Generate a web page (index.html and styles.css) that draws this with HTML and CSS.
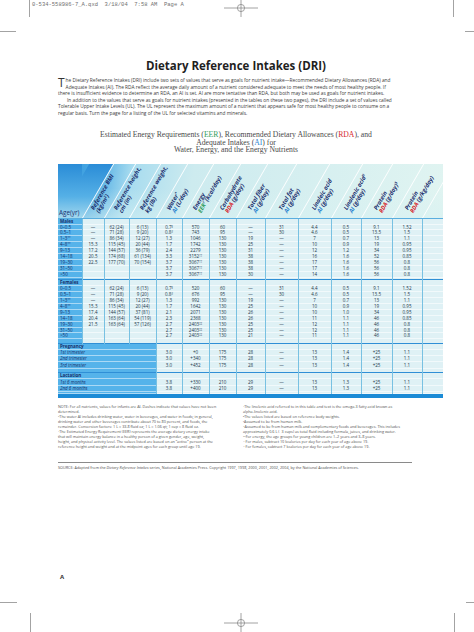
FILE: index.html
```html
<!DOCTYPE html>
<html lang="en">
<head>
<meta charset="utf-8">
<title>Dietary Reference Intakes (DRI)</title>
<link rel="stylesheet" href="styles.css">
</head>
<body>
<svg class="marks" width="474" height="632" viewBox="0 0 474 632" aria-hidden="true">
  <g stroke="#8c8c8c" stroke-width="0.8" fill="none">
    <line x1="29.5" y1="0" x2="29.5" y2="17"/>
    <line x1="0" y1="31.5" x2="16" y2="31.5"/>
    <line x1="453.5" y1="0" x2="453.5" y2="17"/>
    <line x1="465" y1="31.5" x2="474" y2="31.5"/>
    <line x1="224" y1="8" x2="258" y2="8"/>
    <line x1="241" y1="0" x2="241" y2="17"/>
    <circle cx="241" cy="8" r="3.6"/>
    <line x1="0" y1="602.5" x2="17" y2="602.5"/>
    <line x1="30.5" y1="613" x2="30.5" y2="632"/>
    <line x1="466" y1="602.5" x2="474" y2="602.5"/>
    <line x1="454.5" y1="613" x2="454.5" y2="632"/>
    <line x1="224" y1="623" x2="258" y2="623"/>
    <line x1="241" y1="613" x2="241" y2="632"/>
    <circle cx="241" cy="623" r="3.6"/>
  </g>
</svg>
<div class="slug">0-534-558986-7_A.qxd  3/18/04  7:58 AM  Page A</div>

<main class="page">
  <h1 class="title">Dietary Reference Intakes (DRI)</h1>

  <div class="intro">
    <span class="cap">T</span>
    <div class="ln">he Dietary Reference Intakes (DRI) include two sets of values that serve as goals for nutrient intake—Recommended Dietary Allowances (RDA) and</div>
    <div class="ln">Adequate Intakes (AI). The RDA reflect the average daily amount of a nutrient considered adequate to meet the needs of most healthy people. If</div>
    <div class="ln">there is insufficient evidence to determine an RDA, an AI is set. AI are more tentative than RDA, but both may be used as goals for nutrient intakes.</div>
    <div class="ln ind">In addition to the values that serve as goals for nutrient intakes (presented in the tables on these two pages), the DRI include a set of values called</div>
    <div class="ln">Tolerable Upper Intake Levels (UL). The UL represent the maximum amount of a nutrient that appears safe for most healthy people to consume on a</div>
    <div class="ln">regular basis. Turn the page for a listing of the UL for selected vitamins and minerals.</div>
  </div>

  <h2 class="sub">Estimated Energy Requirements (<span class="g">EER</span>), Recommended Dietary Allowances (<span class="r">RDA</span>), and<br>Adequate Intakes (<span class="b">AI</span>) for<br>Water, Energy, and the Energy Nutrients</h2>

  <section class="dri">
    <div class="thead">
      <div class="hc age c1"><span class="agelbl">Age(yr)</span></div>
      <div class="hc c2"><span class="lbl">Reference BMI<br>(kg/m<sup>2</sup>)</span></div>
      <div class="hc c3"><span class="lbl">Reference height,<br>cm (in)</span></div>
      <div class="hc c4"><span class="lbl">Reference weight,<br>kg (lb)</span></div>
      <div class="hc c5"><span class="lbl">Water<sup>*</sup><br><span class="b">AI</span> (L/day)</span></div>
      <div class="hc c6"><span class="lbl">Energy<br><span class="g">EER</span><sup>†</sup> (kcal/day)</span></div>
      <div class="hc c7"><span class="lbl">Carbohydrate<br><span class="r">RDA</span> (g/day)</span></div>
      <div class="hc c8"><span class="lbl">Total fiber<br><span class="b">AI</span> (g/day)</span></div>
      <div class="hc c9"><span class="lbl">Total fat<br><span class="b">AI</span> (g/day)</span></div>
      <div class="hc c10"><span class="lbl">Linoleic acid<br><span class="b">AI</span> (g/day)</span></div>
      <div class="hc c11"><span class="lbl">Linolenic acid<sup>‡</sup><br><span class="b">AI</span> (g/day)</span></div>
      <div class="hc c12"><span class="lbl">Protein<br><span class="r">RDA</span> (g/day)<sup>§</sup></span></div>
      <div class="hc c13"><span class="lbl">Protein<br><span class="r">RDA</span> (g/kg/day)</span></div>
      <div class="hc c14"></div>
    </div>
    <div class="hline"></div>
    <table class="tb">
      <colgroup>
        <col class="c1"><col class="c2"><col class="c3"><col class="c4"><col class="c5"><col class="c6"><col class="c7"><col class="c8"><col class="c9"><col class="c10"><col class="c11"><col class="c12"><col class="c13"><col class="c14">
      </colgroup>
      <tbody>
        <tr class="hd"><td class="a">Males</td><td></td><td></td><td></td><td></td><td></td><td></td><td></td><td></td><td></td><td></td><td></td><td></td><td></td></tr>
        <tr class="r"><td class="a">0–0.5</td><td>—</td><td>62 (24)</td><td>6 (13)</td><td>0.7<sup>‖</sup></td><td>570</td><td>60</td><td>—</td><td>31</td><td>4.4</td><td>0.5</td><td>9.1</td><td>1.52</td><td></td></tr>
        <tr class="r"><td class="a">0.5–1</td><td>—</td><td>71 (28)</td><td>9 (20)</td><td>0.8<sup>#</sup></td><td>743</td><td>95</td><td>—</td><td>30</td><td>4.6</td><td>0.5</td><td>13.5</td><td>1.5</td><td></td></tr>
        <tr class="r"><td class="a">1–3<sup>**</sup></td><td>—</td><td>86 (34)</td><td>12 (27)</td><td>1.3</td><td>1046</td><td>130</td><td>19</td><td>—</td><td>7</td><td>0.7</td><td>13</td><td>1.1</td><td></td></tr>
        <tr class="r"><td class="a">4–8<sup>**</sup></td><td>15.3</td><td>115 (45)</td><td>20 (44)</td><td>1.7</td><td>1742</td><td>130</td><td>25</td><td>—</td><td>10</td><td>0.9</td><td>19</td><td>0.95</td><td></td></tr>
        <tr class="r"><td class="a">9–13</td><td>17.2</td><td>144 (57)</td><td>36 (79)</td><td>2.4</td><td>2279</td><td>130</td><td>31</td><td>—</td><td>12</td><td>1.2</td><td>34</td><td>0.95</td><td></td></tr>
        <tr class="r"><td class="a">14–18</td><td>20.5</td><td>174 (68)</td><td>61 (134)</td><td>3.3</td><td>3152<sup>††</sup></td><td>130</td><td>38</td><td>—</td><td>16</td><td>1.6</td><td>52</td><td>0.85</td><td></td></tr>
        <tr class="r"><td class="a">19–30</td><td>22.5</td><td>177 (70)</td><td>70 (154)</td><td>3.7</td><td>3067<sup>††</sup></td><td>130</td><td>38</td><td>—</td><td>17</td><td>1.6</td><td>56</td><td>0.8</td><td></td></tr>
        <tr class="r"><td class="a">31–50</td><td></td><td></td><td></td><td>3.7</td><td>3067<sup>††</sup></td><td>130</td><td>38</td><td>—</td><td>17</td><td>1.6</td><td>56</td><td>0.8</td><td></td></tr>
        <tr class="r"><td class="a">&gt;50</td><td></td><td></td><td></td><td>3.7</td><td>3067<sup>††</sup></td><td>130</td><td>30</td><td>—</td><td>14</td><td>1.6</td><td>56</td><td>0.8</td><td></td></tr>
        <tr class="gap"><td class="a"></td><td></td><td></td><td></td><td></td><td></td><td></td><td></td><td></td><td></td><td></td><td></td><td></td><td></td></tr>

        <tr class="hd"><td class="a">Females</td><td></td><td></td><td></td><td></td><td></td><td></td><td></td><td></td><td></td><td></td><td></td><td></td><td></td></tr>
        <tr class="r"><td class="a">0–0.5</td><td>—</td><td>62 (24)</td><td>6 (13)</td><td>0.7<sup>‖</sup></td><td>520</td><td>60</td><td>—</td><td>31</td><td>4.4</td><td>0.5</td><td>9.1</td><td>1.52</td><td></td></tr>
        <tr class="r"><td class="a">0.5–1</td><td>—</td><td>71 (28)</td><td>9 (20)</td><td>0.8<sup>#</sup></td><td>676</td><td>95</td><td>—</td><td>30</td><td>4.6</td><td>0.5</td><td>13.5</td><td>1.5</td><td></td></tr>
        <tr class="r"><td class="a">1–3<sup>**</sup></td><td>—</td><td>86 (34)</td><td>12 (27)</td><td>1.3</td><td>992</td><td>130</td><td>19</td><td>—</td><td>7</td><td>0.7</td><td>13</td><td>1.1</td><td></td></tr>
        <tr class="r"><td class="a">4–8<sup>**</sup></td><td>15.3</td><td>115 (45)</td><td>20 (44)</td><td>1.7</td><td>1642</td><td>130</td><td>25</td><td>—</td><td>10</td><td>0.9</td><td>19</td><td>0.95</td><td></td></tr>
        <tr class="r"><td class="a">9–13</td><td>17.4</td><td>144 (57)</td><td>37 (81)</td><td>2.1</td><td>2071</td><td>130</td><td>26</td><td>—</td><td>10</td><td>1.0</td><td>34</td><td>0.95</td><td></td></tr>
        <tr class="r"><td class="a">14–18</td><td>20.4</td><td>163 (64)</td><td>54 (119)</td><td>2.3</td><td>2368</td><td>130</td><td>26</td><td>—</td><td>11</td><td>1.1</td><td>46</td><td>0.85</td><td></td></tr>
        <tr class="r"><td class="a">19–30</td><td>21.5</td><td>163 (64)</td><td>57 (126)</td><td>2.7</td><td>2403<sup>‡‡</sup></td><td>130</td><td>25</td><td>—</td><td>12</td><td>1.1</td><td>46</td><td>0.8</td><td></td></tr>
        <tr class="r"><td class="a">31–50</td><td></td><td></td><td></td><td>2.7</td><td>2403<sup>‡‡</sup></td><td>130</td><td>25</td><td>—</td><td>12</td><td>1.1</td><td>46</td><td>0.8</td><td></td></tr>
        <tr class="r"><td class="a">&gt;50</td><td></td><td></td><td></td><td>2.7</td><td>2403<sup>‡‡</sup></td><td>130</td><td>21</td><td>—</td><td>11</td><td>1.1</td><td>46</td><td>0.8</td><td></td></tr>
        <tr class="gap wide"><td class="a"></td><td></td><td></td><td></td><td></td><td></td><td></td><td></td><td></td><td></td><td></td><td></td><td></td><td></td></tr>

        <tr class="hd tall"><td class="a" colspan="4">Pregnancy</td><td></td><td></td><td></td><td></td><td></td><td></td><td></td><td></td><td></td><td></td></tr>
        <tr class="r pr"><td class="a it" colspan="4">1st trimester</td><td>3.0</td><td>+0</td><td>175</td><td>28</td><td>—</td><td>13</td><td>1.4</td><td>+25</td><td>1.1</td><td></td></tr>
        <tr class="r pr"><td class="a it" colspan="4">2nd trimester</td><td>3.0</td><td>+340</td><td>175</td><td>28</td><td>—</td><td>13</td><td>1.4</td><td>+25</td><td>1.1</td><td></td></tr>
        <tr class="r pr"><td class="a it" colspan="4">3rd trimester</td><td>3.0</td><td>+452</td><td>175</td><td>28</td><td>—</td><td>13</td><td>1.4</td><td>+25</td><td>1.1</td><td></td></tr>
        <tr class="gap wide"><td class="a" colspan="4"></td><td></td><td></td><td></td><td></td><td></td><td></td><td></td><td></td><td></td><td></td></tr>

        <tr class="hd tall"><td class="a" colspan="4">Lactation</td><td></td><td></td><td></td><td></td><td></td><td></td><td></td><td></td><td></td><td></td></tr>
        <tr class="r pr"><td class="a it" colspan="4">1st 6 months</td><td>3.8</td><td>+330</td><td>210</td><td>29</td><td>—</td><td>13</td><td>1.3</td><td>+25</td><td>1.1</td><td></td></tr>
        <tr class="r pr"><td class="a it" colspan="4">2nd 6 months</td><td>3.8</td><td>+400</td><td>210</td><td>29</td><td>—</td><td>13</td><td>1.3</td><td>+25</td><td>1.1</td><td></td></tr>
        <tr class="end"><td class="a" colspan="4"></td><td></td><td></td><td></td><td></td><td></td><td></td><td></td><td></td><td></td><td></td></tr>
      </tbody>
    </table>
    <div class="bar"></div>
  </section>

  <div class="notes">
    <p class="col">NOTE: For all nutrients, values for infants are AI. Dashes indicate that values have not been<br>determined.<br><sup>*</sup>The water AI includes drinking water, water in beverages, and water in foods; in general,<br>drinking water and other beverages contribute about 70 to 80 percent, and foods, the<br>remainder. Conversion factors: 1 L = 33.8 fluid oz; 1 L = 1.06 qt; 1 cup = 8 fluid oz.<br><sup>†</sup>The Estimated Energy Requirement (EER) represents the average dietary energy intake<br>that will maintain energy balance in a healthy person of a given gender, age, weight,<br>height, and physical activity level. The values listed are based on an “active” person at the<br>reference height and weight and at the midpoint ages for each group until age 19.</p>
    <p class="col"><sup>‡</sup>The linolenic acid referred to in this table and text is the omega-3 fatty acid known as<br>alpha-linolenic acid.<br><sup>§</sup>The values listed are based on reference body weights.<br><sup>‖</sup>Assumed to be from human milk.<br><sup>#</sup>Assumed to be from human milk and complementary foods and beverages. This includes<br>approximately 0.6 L (~3 cups) as total fluid including formula, juices, and drinking water.<br><sup>**</sup>For energy, the age groups for young children are 1–2 years and 3–8 years.<br><sup>††</sup>For males, subtract 10 kcalories per day for each year of age above 19.<br><sup>‡‡</sup>For females, subtract 7 kcalories per day for each year of age above 19.</p>
  </div>

  <p class="source">SOURCE: Adapted from the <i>Dietary Reference Intakes</i> series, National Academies Press. Copyright 1997, 1998, 2000, 2001, 2002, 2004, by the National Academies of Sciences.</p>

  <div class="folio">A</div>
</main>
</body>
</html>
```

FILE: styles.css
```css
html, body {
  margin: 0;
  padding: 0;
  background: #ffffff;
}
body {
  width: 474px;
  height: 632px;
  position: relative;
  overflow: hidden;
  font-family: "Open Sans", "Liberation Sans", sans-serif;
  color: #333;
}

.marks {
  position: absolute;
  left: 0;
  top: 0;
  pointer-events: none;
}

.slug {
  position: absolute;
  left: 32px;
  top: 2px;
  font: 5.5px/6px "Liberation Mono", monospace;
  color: #707070;
  white-space: pre;
}

.page {
  padding: 0 0 0 58px;
  width: 356px;
}

.title {
  margin: 59px 0 0;
  font: 700 11.5px/14px "Open Sans", sans-serif;
  text-align: center;
  color: #1f1f1f;
}

.intro {
  margin-top: 4px;
  font: 4.8px/6.5px "Open Sans", sans-serif;
  color: #3a3a3a;
}
.intro .cap {
  float: left;
  height: 12.5px;
  font: 400 12px/12.5px "Open Sans", sans-serif;
  color: #333;
  margin: 0 1px 0 0;
}
.intro .ln {
  white-space: nowrap;
}
.intro .ind {
  padding-left: 9px;
}

.sub {
  margin: 15px 0 0;
  font: 400 7.7px/7.5px "Liberation Serif", serif;
  color: #4a4a4a;
  text-align: center;
}
.g { color: #2f9c5c; }
.r { color: #d6262c; }
.b { color: #2f86d0; }

/* ---------- table ---------- */
.dri {
  margin-top: 10px;
  width: 385px;
}

.thead {
  width: 385px;
  height: 54px;
  display: flex;
  overflow: hidden;
  background:
    linear-gradient(to bottom, rgba(255,255,255,0) 45%, rgba(215,241,242,0.55) 100%),
    linear-gradient(100deg, #2f94db 0px, #4aa9e3 38px, #a8dcef 74px, #cdebef 135px, #e0f4f1 385px);
}
.hc {
  position: relative;
  flex: none;
  height: 100%;
  display: flex;
  align-items: flex-end;
}
.hc::before {
  content: "";
  position: absolute;
  left: 0;
  bottom: 0;
  width: 1px;
  height: 100%;
  background: rgba(255,255,255,0.95);
  transform: skewX(-30deg);
  transform-origin: 0 100%;
}
.hc.age::before { display: none; }
.hc.age::after {
  content: "";
  position: absolute;
  left: 0;
  bottom: 0;
  width: 100%;
  height: 100%;
  background: linear-gradient(to bottom, #2a8cd7, #55b0e6 60%, #a3d8ee);
  transform: skewX(-30deg);
  transform-origin: 0 100%;
}
.hc.age {
  background: linear-gradient(to bottom, #2a8cd7, #55b0e6 60%, #a3d8ee);
}
.agelbl {
  position: relative;
  z-index: 1;
  font: 400 6.3px/6.5px "Open Sans", sans-serif;
  color: #1b2f6e;
  padding: 0 0 1px 1px;
  white-space: nowrap;
}
.lbl {
  position: relative;
  z-index: 1;
  display: block;
  white-space: nowrap;
  margin: 0 0 4px calc(50% + 6.5px);
  font: italic 700 5.9px/6px "Open Sans", sans-serif;
  color: #1b2f6e;
  transform: rotate(-60deg);
  transform-origin: 0 100%;
}
.lbl sup, .tb sup, .notes sup {
  font-size: 65%;
  line-height: 0;
  vertical-align: 0.5em;
}

.c1 { width: 24px; }
.c2 { width: 22px; }
.c3 { width: 25px; }
.c4 { width: 27px; }
.c5 { width: 26px; }
.c6 { width: 27px; }
.c7 { width: 27px; }
.c8 { width: 29px; }
.c9 { width: 33px; }
.c10 { width: 33px; }
.c11 { width: 30px; }
.c12 { width: 31px; }
.c13 { width: 30px; }
.c14 { width: 21px; }

.hline {
  width: 385px;
  height: 1px;
  background: #5aaedf;
}

.tb {
  width: 385px;
  border-collapse: separate;
  border-spacing: 0;
  table-layout: fixed;
}
.tb td {
  padding: 0;
  font: 400 4.5px/5.9px "Open Sans", sans-serif;
  color: #26384a;
  text-align: center;
  white-space: nowrap;
  overflow: visible;
  background: #dff1f5;
  box-shadow: inset 1px 0 0 #78c1e2, inset 0 -1px 0 rgba(255,255,255,0.55);
}
.tb td.a {
  background: #55b3ea;
  text-align: left;
  padding-left: 2px;
  color: #17306a;
  box-shadow: inset 0 -1px 0 rgba(255,255,255,0.5);
}
.tb td.it { font-style: italic; }
.tb tr.r { height: 5.9px; }
.tb tr.pr { height: 6.2px; }
.tb tr.hd { height: 6px; }
.tb tr.hd.tall { height: 6.6px; }
.tb tr.hd td.a { font-weight: 700; }
.tb tr.gap { height: 2.5px; }
.tb tr.gap.wide { height: 4.2px; }
.tb tr.gap td {
  line-height: 0;
  box-shadow: inset 1px 0 0 #78c1e2, inset 0 -1px 0 #2f8fd6;
}
.tb tr.gap td.a { box-shadow: inset 0 -1px 0 #2f8fd6; }
.tb tr.end { height: 2.5px; }
.tb tr.end td { line-height: 0; }

.bar {
  width: 385px;
  height: 4px;
  background: #1b8bd6;
}

/* ---------- notes ---------- */
.notes {
  margin-top: 7px;
  display: grid;
  grid-template-columns: 174px 170px;
  column-gap: 11px;
}
.notes .col {
  margin: 0;
  font: 400 3.75px/4.9px "Open Sans", sans-serif;
  color: #505050;
  white-space: nowrap;
}

.source {
  margin: 13px 0 0;
  width: 354px;
  border-top: 1px solid #8a8a8a;
  padding-top: 3px;
  font: 400 3.78px/4.5px "Open Sans", sans-serif;
  color: #505050;
  white-space: nowrap;
}

.folio {
  margin: 103px 0 0 2px;
  font: 700 6px/7px "Open Sans", sans-serif;
  color: #333;
}
```
